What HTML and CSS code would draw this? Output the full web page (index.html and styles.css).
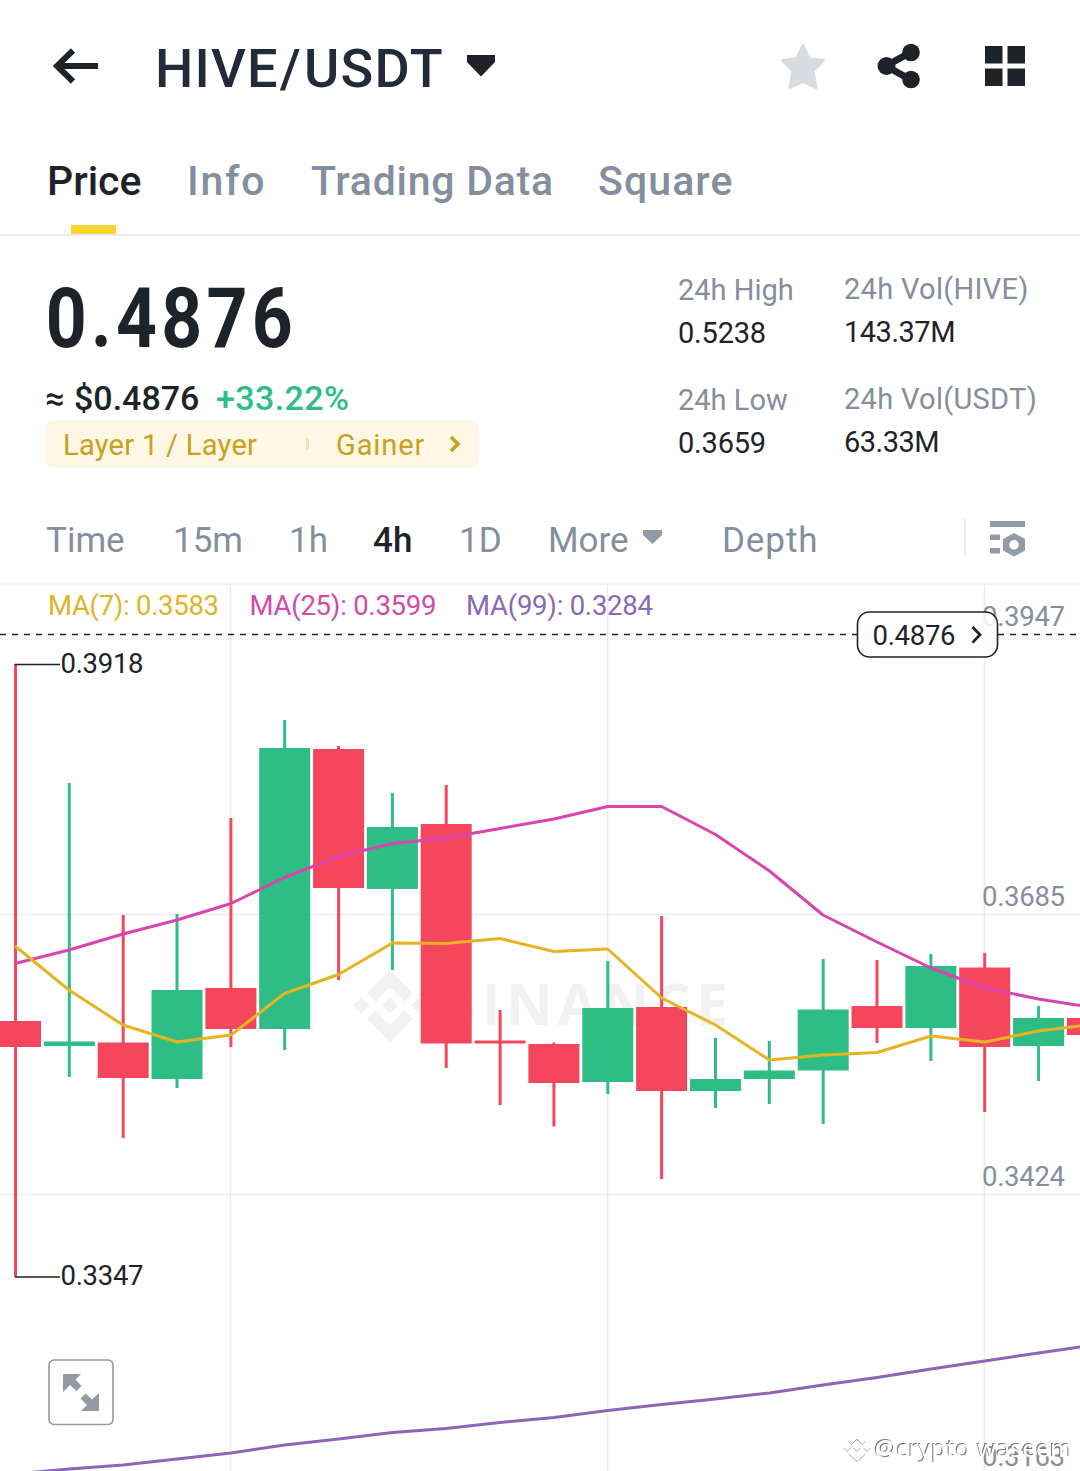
FILE: index.html
```html
<!DOCTYPE html>
<html lang="en">
<head>
<meta charset="UTF-8">
<title>HIVE/USDT</title>
<link rel="stylesheet" href="styles.css">
</head>
<body>
<div class="header">
    <svg class="back" width="46" height="36" viewBox="0 0 46 36"><path d="M45 18H4M20 2.500L4 18l16 15.500" fill="none" stroke="#1e2329" stroke-width="6"/></svg>
    <div class="pair">HIVE<span class="slash">/</span>USDT</div>
    <svg class="caret" width="28" height="22" viewBox="0 0 28 22"><path d="M0 0h28v7L14 21.500 0 7z" fill="#1e2329"/></svg>
    <div class="actions">
        <svg width="46" height="48" viewBox="0 0 46 48"><path d="M23 3.500l6 13 14.500 2-10.500 10.500 3 16.500L23 39.500 10 45.500l3-16.500L2.500 18.500l14.500-2z" fill="#d8dce1" stroke="#d8dce1" stroke-width="3" stroke-linejoin="round"/></svg>
        <svg width="44" height="46" viewBox="0 0 44 46"><path d="M34 9L9 23l25 14" fill="none" stroke="#1e2329" stroke-width="7"/><circle cx="34" cy="9.500" r="8.800" fill="#1e2329"/><circle cx="9.500" cy="23" r="9" fill="#1e2329"/><circle cx="34" cy="36.500" r="8.800" fill="#1e2329"/></svg>
        <svg width="40" height="40" viewBox="0 0 40 40"><path d="M0 0h17.500v17.500H0zM22.500 0H40v17.500H22.500zM0 22.500h17.500V40H0zM22.500 22.500H40V40H22.500z" fill="#1e2329"/></svg>
    </div>
</div>

<div class="tabs">
    <div class="tab active">Price</div>
    <div class="tab info">Info</div>
    <div class="tab trading">Trading Data</div>
    <div class="tab square">Square</div>
</div>

<div class="ticker">
    <div class="quote">
        <div class="last">0.4876</div>
        <div class="fiat"><span class="approx">≈</span><span class="usd">$0.4876</span><span class="change">+33.22%</span></div>
        <div class="tags">
            <span class="layer">Layer 1 / Layer</span>
            <span class="bar"></span>
            <span class="gainer">Gainer</span>
            <svg width="12" height="18" viewBox="0 0 12 18"><path d="M2 2l7 7-7 7" fill="none" stroke="#c99f1c" stroke-width="3.600"/></svg>
        </div>
    </div>
    <div class="stats">
        <div class="stat"><div class="name">24h High</div><div class="value">0.5238</div></div>
        <div class="stat"><div class="name">24h Low</div><div class="value">0.3659</div></div>
    </div>
    <div class="stats volume">
        <div class="stat"><div class="name">24h Vol(HIVE)</div><div class="value">143.37M</div></div>
        <div class="stat"><div class="name">24h Vol(USDT)</div><div class="value">63.33M</div></div>
    </div>
</div>

<div class="intervals">
    <span>Time</span>
    <span>15m</span>
    <span>1h</span>
    <span class="selected">4h</span>
    <span>1D</span>
    <span class="more">More <svg width="20" height="15" viewBox="0 0 20 15"><path d="M0 0h19v5L9.500 14 0 5z" fill="#929aa5"/></svg></span>
    <span class="depth">Depth</span>
    <div class="tools">
        <svg width="36" height="36" viewBox="0 0 36 36"><path d="M0 0h35v6H0zM0 13.500h10v5.500H0zM0 27h10v5.500H0z" fill="#929aa5"/><path fill-rule="evenodd" d="M24 12L35 18v11.500l-11 6-11-6V18zM24 19a4.800 4.800 0 1 0 0 9.600A4.800 4.800 0 0 0 24 19z" fill="#929aa5"/></svg>
    </div>
</div>

<div class="chart">
<svg class="plot" width="1080" height="886" viewBox="0 585 1080 886">
    <!-- grid -->
    <path class="grid" d="M230.500 585V1471M607.500 585V1471M984.500 585V1471M0 914.500H1080M0 1194.500H1080"/>
    <!-- watermark -->
    <g class="mark">
        <path d="M390 970l23 23-8.500 8.500L390 987l-14.500 14.500L367 993zM390 1042l-23-23 8.500-8.500L390 1025l14.500-14.500 8.500 8.500zM390 997.500l8 8-8 8-8-8zM361 997.500l8 8-8 8-8-8zM419 997.500l8 8-8 8-8-8z"/>
        <text x="438" y="1025" textLength="290">BINANCE</text>
    </g>
    <g id="candles"></g>
    <!-- moving averages -->
    <polyline class="ma ma25" points="15,963.500 69,950 123,934 177,920 231,903.500 284.500,877.500 338.500,856.500 392.500,843.500 446,838 500,828.500 554,819 607.700,806.500 661.700,806.500 715.500,834.500 769.500,871 823,915 877,942 931,968 984.700,988 1038.500,999 1080,1005.500"/>
    <polyline class="ma ma7" points="15,946 69,990 123,1025 177,1042 231,1035 284.500,993.500 338.500,974.500 392.500,943 446,943.500 500,938.500 554,951.500 607.700,949 661.700,998 715.500,1025 769.500,1060 823,1055 877,1052.500 931,1036 984.700,1042 1038.500,1031 1080,1026"/>
    <polyline class="ma ma99" points="15,1474 69,1469 123,1465 177,1459 231,1453 284.500,1445 338.500,1439 392.500,1432.500 446,1428.500 500,1422.500 554,1417.500 607.700,1410.500 661.700,1404.500 715.500,1399 769.500,1393 823,1385 877,1377.500 931,1369 984.700,1361 1038.500,1353 1080,1347"/>
    <!-- high / low of the visible range -->
    <path class="pointer" d="M15 664.500H60M15 1277H60"/>
    <g class="extreme">
        <text x="60.500" y="673" textLength="83">0.3918</text>
        <text x="60.500" y="1285" textLength="83">0.3347</text>
    </g>
    <g class="axis">
        <text x="982" y="626" textLength="83">0.3947</text>
        <text x="982" y="906" textLength="83">0.3685</text>
        <text x="982" y="1186" textLength="83">0.3424</text>
        <text x="982" y="1466" textLength="83">0.3163</text>
    </g>
    <g class="legend">
        <text class="t7" x="48" y="615" textLength="171">MA(7): 0.3583</text>
        <text class="t25" x="249.500" y="615" textLength="187">MA(25): 0.3599</text>
        <text class="t99" x="466" y="615" textLength="187">MA(99): 0.3284</text>
    </g>
    <!-- last price -->
    <path class="price-line" d="M0 634.500H857M998 634.500H1080"/>
    <rect class="price-box" x="857.500" y="612" width="140" height="45" rx="12"/>
    <text class="price-text" x="872.500" y="644.500" textLength="83">0.4876</text>
    <path class="price-arrow" d="M972.500 627l7.500 7.800-7.500 7.800"/>
    <!-- fullscreen button -->
    <rect class="full-box" x="49" y="1360" width="64" height="64.500" rx="5"/>
    <path class="full-icon" d="M63 1374h18l-5.500 5.500 6 6.500-5 5-6.500-6L63 1392zM99 1411H81l6-6-6.500-6.500 5-5 6.500 6 7-6.500z"/>
    <!-- author -->
    <g class="author">
        <path d="M848.500 1441.500l3 3 5.500-5 5.500 5 3-3M853 1443l4-4 4 4M843.500 1448l3.500 3.500 3.500-3.500M853.500 1448l3.500 3.500 3.500-3.500M863.500 1448l3.500 3.500 3.500-3.500M848.500 1454l8.500 7.500 8.500-7.500"/>
        <text x="874.500" y="1456.500" textLength="198">@crypto waseem</text>
    </g>
</svg>
</div>

<script>
// x center, wick top, wick bottom, body top, body bottom, up or down
const candles = [
    [15.5, 664, 1277, 1021, 1047, 'down'],
    [69.3, 783, 1077, 1041.5, 1046, 'up'],
    [123.2, 915, 1138, 1042.5, 1078, 'down'],
    [177, 914, 1088, 990, 1079, 'up'],
    [230.9, 818, 1047, 988, 1029, 'down'],
    [284.7, 720, 1050, 748, 1029, 'up'],
    [338.6, 746, 980, 749, 888, 'down'],
    [392.4, 793, 970, 827, 889, 'up'],
    [446.2, 785, 1068, 824, 1043.5, 'down'],
    [500.1, 1010, 1105, 1040.5, 1043.5, 'down'],
    [553.9, 1042.5, 1126.5, 1044, 1083, 'down'],
    [607.8, 961, 1094, 1008, 1082, 'up'],
    [661.6, 916, 1179, 1007, 1091, 'down'],
    [715.5, 1038, 1108, 1079, 1091, 'up'],
    [769.3, 1041, 1104, 1070.5, 1079, 'up'],
    [823.2, 959, 1124, 1009.5, 1070.5, 'up'],
    [877, 960, 1043, 1006, 1028, 'down'],
    [930.9, 954, 1061, 966, 1028, 'up'],
    [984.7, 953, 1112, 967.5, 1047, 'down'],
    [1038.6, 1006, 1081, 1018, 1046, 'up'],
    [1092.4, 1018, 1035, 1018, 1035, 'down']
];
let out = '';
for (const [x, high, low, top, bottom, dir] of candles) {
    out += `<rect class="${dir}" x="${x - 1.5}" y="${high}" width="3" height="${low - high}"/>`;
    out += `<rect class="${dir}" x="${x - 25.5}" y="${top}" width="51" height="${bottom - top}"/>`;
}
document.getElementById('candles').innerHTML = out;
</script>
</body>
</html>
```
FILE: styles.css
```css
body {
    margin: 0;
    width: 1080px;
    height: 1471px;
    overflow: hidden;
    background: #fff;
    color: #1e2329;
    font-family: Roboto, "Noto Sans", sans-serif;
}

svg {
    display: block;
}

.header {
    display: flex;
    align-items: center;
    height: 132px;
    padding: 0 55px 0 53px;
}
.pair {
    width: 312px;
    margin-left: 56px;
    padding-top: 4px;
    font-size: 54px;
    font-weight: 500;
    letter-spacing: 1.2px;
    color: #232b3a;
    white-space: nowrap;
}
.slash {
    margin: 0 2px 0 1px;
}
.actions {
    display: flex;
    align-items: center;
    margin-left: auto;
}
.actions svg + svg {
    margin-left: 51px;
}
.actions svg + svg + svg {
    margin-left: 64px;
}

.tabs {
    display: flex;
    height: 102px;
    padding-left: 47px;
    border-bottom: 2px solid #eaecef;
    font-size: 41px;
    line-height: 98px;
    font-weight: 500;
    color: #848e9c;
    white-space: nowrap;
}
.tab {
    width: 140px;
}
.tab.active {
    color: #1e2329;
}
.tab.active::after {
    content: "";
    display: block;
    width: 45px;
    height: 9px;
    margin: -5px 0 0 24px;
    background: #fcd535;
}
.tab.info {
    width: 124px;
    letter-spacing: 1.8px;
}
.tab.trading {
    width: 287px;
    letter-spacing: .75px;
}
.tab.square {
    letter-spacing: 1.1px;
}

.ticker {
    display: flex;
    height: 262px;
    white-space: nowrap;
}
.quote {
    width: 678px;
    padding: 33px 0 0 45px;
    box-sizing: border-box;
}
.last {
    width: 300px;
    height: 98px;
    padding-left: 1px;
    font-size: 83px;
    line-height: 100px;
    font-weight: 700;
    letter-spacing: 5px;
    transform: scaleX(.86);
    transform-origin: left;
}
.fiat {
    display: flex;
    height: 53px;
    font-size: 34px;
    line-height: 62px;
    font-weight: 500;
}
.approx {
    width: 29px;
}
.usd {
    width: 142px;
}
.change {
    color: #2ebd85;
    letter-spacing: .4px;
}
.tags {
    display: flex;
    align-items: center;
    width: 434px;
    height: 48px;
    padding-left: 18px;
    box-sizing: border-box;
    border-radius: 10px;
    background: #fdf7e3;
    color: #c99f1c;
    font-size: 29px;
    line-height: 36px;
}
.layer {
    width: 243px;
    padding-top: 2px;
    letter-spacing: .3px;
}
.bar {
    width: 3px;
    height: 12px;
    background: #eee0b0;
}
.gainer {
    width: 113px;
    padding-top: 2px;
    margin-left: 27px;
    letter-spacing: .9px;
}
.stats {
    width: 166px;
    padding-top: 33px;
}
.stats.volume {
    padding-top: 32px;
}
.stat {
    height: 110px;
    font-size: 29px;
}
.name {
    height: 43px;
    line-height: 43px;
    color: #848e9c;
}
.volume .name {
    letter-spacing: .3px;
}
.value {
    height: 43px;
    line-height: 43px;
    letter-spacing: -.2px;
}
.volume .value {
    line-height: 42px;
    letter-spacing: -.5px;
}

.intervals {
    display: grid;
    grid-template-columns: 127px 116px 84px 86px 89px 174px 242px auto;
    height: 85px;
    padding-left: 46px;
    border-bottom: 2px solid #f2f3f5;
    font-size: 35px;
    line-height: 85px;
    color: #848e9c;
    white-space: nowrap;
}
.selected {
    font-weight: 500;
    color: #1e2329;
}
.more {
    display: flex;
    gap: 14px;
}
.more svg {
    margin-top: 32px;
}
.depth {
    letter-spacing: .9px;
}
.tools {
    height: 36px;
    margin-top: 21px;
    padding-left: 24px;
    border-left: 2px solid #eaecef;
}
.tools svg {
    margin-top: 2px;
}

.chart {
    height: 886px;
}
.grid {
    stroke: #ececee;
    stroke-width: 1.5;
    fill: none;
}
.mark {
    fill: #f0f1f1;
}
.up {
    fill: #2ebd85;
}
.down {
    fill: #f6465d;
}
.ma {
    fill: none;
    stroke-width: 3;
    stroke-linejoin: round;
}
.ma7 {
    stroke: #e6b422;
}
.ma25 {
    stroke: #d944ad;
}
.ma99 {
    stroke: #8a65b8;
}
.plot text {
    font-size: 27.5px;
}
.plot .mark text {
    font: 700 57px "Open Sans", sans-serif;
}
.pointer {
    stroke: #1e2329;
    stroke-width: 1.5;
}
.extreme {
    fill: #1e2329;
}
.axis {
    fill: #848e9c;
}
.t7 {
    fill: #e0b42a;
}
.t25 {
    fill: #d24aa8;
}
.t99 {
    fill: #8a68b6;
}
.price-line {
    stroke: #1e2329;
    stroke-width: 1.5;
    stroke-dasharray: 6 6;
}
.price-box {
    fill: #fff;
    fill-opacity: .85;
    stroke: #1e2329;
    stroke-width: 1.6;
}
.price-text {
    fill: #1e2329;
}
.price-arrow {
    fill: none;
    stroke: #1e2329;
    stroke-width: 2.8;
}
.full-box {
    fill: #fff;
    stroke: #929aa5;
    stroke-width: 1.6;
}
.full-icon {
    fill: #929aa5;
}
.author path {
    fill: none;
    stroke: #aaa;
    stroke-width: 1;
}
.plot .author text {
    font: 24px "Noto Sans", sans-serif;
    fill: #fff;
    filter: drop-shadow(-.7px -.7px .3px #777);
}
```
